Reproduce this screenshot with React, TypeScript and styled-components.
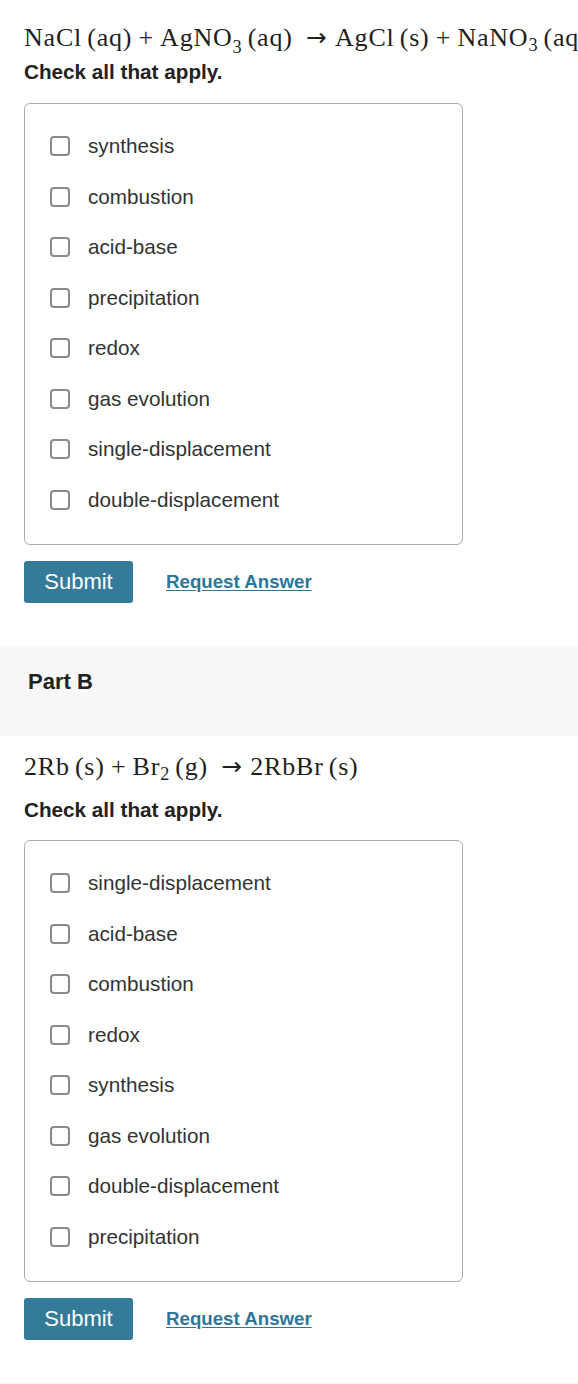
import styled, { createGlobalStyle } from 'styled-components';

const GlobalStyle = createGlobalStyle`
  body {
    margin: 0;
    background: #fff;
    font-family: "Liberation Sans", Arial, sans-serif;
  }
`;

const partA = ['synthesis', 'combustion', 'acid-base', 'precipitation', 'redox', 'gas evolution', 'single-displacement', 'double-displacement'];
const partB = ['single-displacement', 'acid-base', 'combustion', 'redox', 'synthesis', 'gas evolution', 'double-displacement', 'precipitation'];

const Options = ({ items }: { items: string[] }) => (
  <OptionBox>
    {items.map((item) => (
      <Option key={item}>
        <Box type="checkbox" />
        <span>{item}</span>
      </Option>
    ))}
  </OptionBox>
);

const Actions = () => (
  <ActionRow>
    <SubmitButton>Submit</SubmitButton>
    <RequestLink href="#">Request Answer</RequestLink>
  </ActionRow>
);

const App = () => {
  return (
    <Page>
      <GlobalStyle />
      <Section $top={22}>
        <Equation>
          NaCl<Thin />(aq)<Op>+</Op>AgNO<Sub $deep>3</Sub><Thin />(aq)<Arrow>→</Arrow>AgCl<Thin />(s)<Op>+</Op>NaNO<Sub>3</Sub><Thin />(aq)
        </Equation>
        <Instruction $above={6} $below={19}>Check all that apply.</Instruction>
        <Options items={partA} />
        <Actions />
      </Section>

      <PartHeader>Part B</PartHeader>

      <Section $top={15}>
        <Equation>
          2Rb<Thin />(s)<Op>+</Op>Br<Sub>2</Sub><Thin />(g)<Arrow>→</Arrow>2RbBr<Thin />(s)
        </Equation>
        <Instruction $above={15} $below={18}>Check all that apply.</Instruction>
        <Options items={partB} />
        <Actions />
      </Section>

      <PartHeader />
    </Page>
  );
};

const Page = styled.div`
  width: 578px;
  overflow: hidden;
`
const Section = styled.section<{ $top: number }>`
  padding: ${(p) => p.$top}px 0 43px 24px;
`
const Equation = styled.div`
  font-family: "Liberation Serif", "DejaVu Serif", serif;
  font-size: 26px;
  letter-spacing: 0.03em;
  color: #1f1f1f;
  height: 32px;
  line-height: 32px;
  white-space: nowrap;
  overflow: hidden;
`
const Thin = styled.span`
  display: inline-block;
  width: 0.2em;
`
const Op = styled.span`
  margin: 0 0.24em;
`
const Arrow = styled.span`
  font-family: "DejaVu Sans", sans-serif;
  font-size: 0.95em;
  margin: 0 0.3em 0 0.55em;
`
const Sub = styled.span<{ $deep?: boolean }>`
  font-size: 0.7em;
  vertical-align: ${(p) => (p.$deep ? '-0.4em' : '-0.25em')};
  line-height: 0;
`
const Instruction = styled.div<{ $above: number; $below: number }>`
  margin: ${(p) => p.$above}px 0 ${(p) => p.$below}px;
  font-size: 20.7px;
  font-weight: bold;
  line-height: 24px;
  color: #222;
`
const OptionBox = styled.div`
  width: 439px;
  box-sizing: border-box;
  border: 1px solid #ababab;
  border-radius: 6px;
  padding: 17px 0 19px 25px;
`
const Option = styled.label`
  display: flex;
  align-items: center;
  gap: 18px;
  height: 50.5px;
  font-size: 20.7px;
  color: #333;
`
const Box = styled.input`
  appearance: none;
  margin: 0;
  width: 20px;
  height: 20px;
  box-sizing: border-box;
  border: 2px solid #8a8a8a;
  border-radius: 4px;
  background: #fff;
`
const ActionRow = styled.div`
  display: flex;
  align-items: center;
  gap: 33px;
  margin-top: 16px;
`
const SubmitButton = styled.button`
  width: 109px;
  height: 42px;
  border: none;
  border-radius: 3px;
  background: #347a99;
  color: #fff;
  font-family: "Liberation Sans", Arial, sans-serif;
  font-size: 22px;
  padding: 0;
`
const RequestLink = styled.a`
  color: #2f7598;
  font-size: 18.7px;
  font-weight: bold;
  text-decoration: underline;
  text-underline-offset: 2px;
`
const PartHeader = styled.div`
  height: 90px;
  box-sizing: border-box;
  background: #f8f8f8;
  padding: 23px 0 0 28px;
  font-size: 22px;
  line-height: 26px;
  font-weight: bold;
  color: #222;
`

export default App;
